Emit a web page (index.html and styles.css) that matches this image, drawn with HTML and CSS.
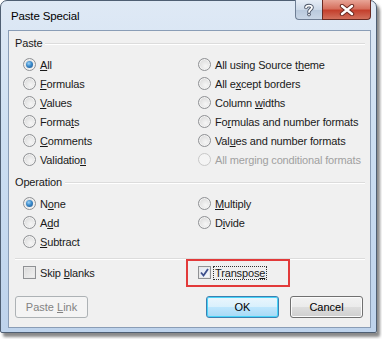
FILE: index.html
```html
<!DOCTYPE html>
<html>
<head>
<meta charset="utf-8">
<link rel="stylesheet" href="styles.css">
</head>
<body>
<div class="window">
  <div class="titlebar">
    <span class="title">Paste Special</span>
    <div class="caption">
      <div class="cap-help">
        <svg width="12" height="14" viewBox="0 0 12 14"><path d="M3 4.5 C3 2 9 2 9 4.5 C9 6.5 6 6.5 6 9" fill="none" stroke="#4a5466" stroke-width="3.6" stroke-linecap="round"/><path d="M3 4.5 C3 2 9 2 9 4.5 C9 6.5 6 6.5 6 9" fill="none" stroke="#fff" stroke-width="1.8" stroke-linecap="round"/><circle cx="6" cy="11.6" r="1.8" fill="#4a5466"/><circle cx="6" cy="11.6" r="0.9" fill="#fff"/></svg>
      </div>
      <div class="cap-close">
        <svg width="18" height="12" viewBox="0 0 18 12"><path d="M4 2 L14 10 M14 2 L4 10" stroke="#6b2a22" stroke-width="4.4" stroke-linecap="round"/><path d="M4 2 L14 10 M14 2 L4 10" stroke="#fff" stroke-width="2.4" stroke-linecap="round"/></svg>
      </div>
    </div>
  </div>
  <div class="client">
    <div class="group-label"><span>Paste</span><div class="line"></div></div>
    <div class="options">
      <label class="opt"><span class="radio on"></span><span><u>A</u>ll</span></label>
      <label class="opt"><span class="radio"></span><span>All using Source t<u>h</u>eme</span></label>
      <label class="opt"><span class="radio"></span><span><u>F</u>ormulas</span></label>
      <label class="opt"><span class="radio"></span><span>All e<u>x</u>cept borders</span></label>
      <label class="opt"><span class="radio"></span><span><u>V</u>alues</span></label>
      <label class="opt"><span class="radio"></span><span>Column <u>w</u>idths</span></label>
      <label class="opt"><span class="radio"></span><span>Forma<u>t</u>s</span></label>
      <label class="opt"><span class="radio"></span><span>Fo<u>r</u>mulas and number formats</span></label>
      <label class="opt"><span class="radio"></span><span><u>C</u>omments</span></label>
      <label class="opt"><span class="radio"></span><span>Val<u>u</u>es and number formats</span></label>
      <label class="opt"><span class="radio"></span><span>Validatio<u>n</u></span></label>
      <label class="opt disabled"><span class="radio"></span><span>All merging conditional formats</span></label>
    </div>
    <div class="group-label op"><span>Operation</span><div class="line"></div></div>
    <div class="options">
      <label class="opt"><span class="radio on"></span><span>N<u>o</u>ne</span></label>
      <label class="opt"><span class="radio"></span><span><u>M</u>ultiply</span></label>
      <label class="opt"><span class="radio"></span><span>A<u>d</u>d</span></label>
      <label class="opt"><span class="radio"></span><span>D<u>i</u>vide</span></label>
      <label class="opt"><span class="radio"></span><span><u>S</u>ubtract</span></label>
    </div>
    <div class="sep"></div>
    <div class="options checks">
      <label class="opt"><span class="check"></span><span>Skip <u>b</u>lanks</span></label>
      <label class="opt transpose"><span class="check on"><svg width="9" height="9" viewBox="0 0 9 9"><path d="M1 4.5 L3.5 7.5 L8 1" fill="none" stroke="#3d4f8c" stroke-width="1.8"/></svg></span><span class="focus">Transpos<u>e</u></span><span class="highlight"></span></label>
    </div>
    <div class="buttons">
      <button class="btn disabled">Paste <u>L</u>ink</button>
      <div class="right">
        <button class="btn default">OK</button>
        <button class="btn">Cancel</button>
      </div>
    </div>
  </div>
</div>
</body>
</html>
```

FILE: styles.css
```css
html, body {
  margin: 0;
  padding: 0;
  background: #ffffff;
}
body {
  width: 382px;
  height: 339px;
  overflow: hidden;
  font-family: "Liberation Sans", Arial, sans-serif;
  font-size: 11px;
  letter-spacing: -0.15px;
  color: #1a1a1a;
}
.window {
  width: 377px;
  height: 333px;
  border: 1px solid #4f5f73;
  border-radius: 7px 7px 2px 2px;
  background: linear-gradient(180deg, #dfe9f5 0%, #cddff2 40%, #bed3ec 100%);
  box-shadow: 3px 4px 3px rgba(40, 40, 40, 0.55);
  box-sizing: border-box;
  padding: 0 5px 4px 7px;
  display: flex;
  flex-direction: column;
}
.titlebar {
  height: 29px;
  display: flex;
  align-items: flex-start;
  justify-content: space-between;
  position: relative;
}
.title {
  margin-top: 9px;
  margin-left: 3px;
  font-size: 11.5px;
  color: #000;
}
.caption {
  display: flex;
  margin-top: -1px;
}
.cap-help {
  width: 26px;
  height: 19px;
  border: 1px solid #6f7f95;
  border-top: none;
  border-right: none;
  border-radius: 0 0 0 4px;
  background: linear-gradient(180deg, #e6edf6 0%, #cdd9e8 50%, #b8c8dc 51%, #c9d6e6 100%);
  display: flex;
  align-items: center;
  justify-content: center;
}
.cap-close {
  width: 47px;
  height: 19px;
  border: 1px solid #6b2a22;
  border-top: none;
  border-radius: 0 0 4px 0;
  background: linear-gradient(180deg, #e8a597 0%, #d6705e 45%, #c4402d 55%, #d2705c 100%);
  display: flex;
  align-items: center;
  justify-content: center;
}
.client {
  flex: 1;
  background: #f0f0f0;
  border: 1px solid #8a9db6;
  padding: 3px 5px 0 6px;
  display: flex;
  flex-direction: column;
}
.group-label {
  height: 18px;
  display: flex;
  align-items: center;
  gap: 3px;
}
.group-label .line {
  flex: 1;
  height: 1px;
  background: #dcdcdc;
  border-bottom: 1px solid #ffffff;
  margin-top: 1px;
}
.group-label.op {
  margin-top: 4px;
}
.options {
  display: grid;
  grid-template-columns: 175px 1fr;
  grid-auto-rows: 19px;
  padding-left: 8px;
  margin-top: 3px;
}
.opt {
  display: flex;
  align-items: center;
  gap: 4px;
  white-space: nowrap;
  position: relative;
}
.opt.disabled {
  color: #a0a0a0;
}
.radio {
  width: 11px;
  height: 11px;
  border-radius: 50%;
  border: 1px solid #8f9194;
  background: radial-gradient(circle at 60% 65%, #f6f6f6 0%, #e3e3e3 55%, #c9c9c9 100%);
  box-shadow: inset 0 0 0 1px #f4f4f4;
  position: relative;
  flex: none;
}
.radio.on::after {
  content: "";
  position: absolute;
  left: 2px;
  top: 2px;
  width: 7px;
  height: 7px;
  border-radius: 50%;
  background: radial-gradient(circle at 40% 35%, #9fd3f7 0%, #3a8acb 45%, #1b4f87 100%);
}
.opt.disabled .radio {
  border-color: #c8c8c8;
  background: #f4f4f4;
}
.sep {
  height: 1px;
  background: #dcdcdc;
  border-bottom: 1px solid #ffffff;
  margin-top: 7px;
}
.checks {
  margin-top: 3px;
}
.check {
  width: 11px;
  height: 11px;
  border: 1px solid #8f9194;
  background: linear-gradient(135deg, #d9d9d9 0%, #f2f2f2 100%);
  box-shadow: inset 0 0 0 1px #e8e8e8;
  flex: none;
  display: flex;
  align-items: center;
  justify-content: center;
}
.check.on {
  background: linear-gradient(135deg, #e0e6f2 0%, #f6f8fc 100%);
}
.focus {
  outline: 1px dotted #333;
  outline-offset: 0;
  padding: 0 1px 0 1px;
  margin-left: -1px;
}
.highlight {
  position: absolute;
  left: -12px;
  top: -4px;
  width: 100px;
  height: 24px;
  border: 2px solid #e23a3a;
}
.buttons {
  display: flex;
  justify-content: space-between;
  margin-top: 14px;
  padding-right: 2px;
}
.right {
  display: flex;
  gap: 11px;
}
.btn {
  width: 73px;
  height: 22px;
  font-family: "Liberation Sans", Arial, sans-serif;
  font-size: 11px;
  color: #000;
  border: 1px solid #707070;
  border-radius: 3px;
  background: linear-gradient(180deg, #f2f2f2 0%, #ebebeb 50%, #dddddd 51%, #cfcfcf 100%);
  box-shadow: inset 0 0 0 1px #fbfbfb;
  padding: 0;
}
.btn.default {
  border-color: #3c7fb1;
  box-shadow: inset 0 0 0 1px #48d4f8;
  background: linear-gradient(180deg, #eaf6fd 0%, #d9f0fc 50%, #bee6fd 51%, #a7d9f5 100%);
}
.btn.disabled {
  color: #838383;
  border-color: #adb2b5;
  background: #f4f4f4;
  box-shadow: none;
}
```
